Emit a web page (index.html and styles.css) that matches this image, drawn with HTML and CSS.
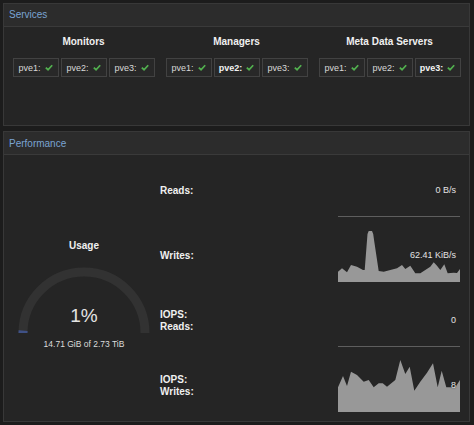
FILE: index.html
```html
<!DOCTYPE html>
<html lang="en">
<head>
<meta charset="utf-8">
<title>Ceph Status</title>
<link rel="stylesheet" href="styles.css">
</head>
<body>
<div class="page">
  <section class="panel">
    <div class="panel-header">Services</div>
    <div class="panel-body services-body">
      <div class="svc-col">
        <div class="svc-title">Monitors</div>
        <div class="badges">
          <span class="badge">pve1: <svg class="check" viewBox="0 0 10 8"><path d="M1 4.2 L3.8 6.8 L9 1.2"/></svg></span>
          <span class="badge">pve2: <svg class="check" viewBox="0 0 10 8"><path d="M1 4.2 L3.8 6.8 L9 1.2"/></svg></span>
          <span class="badge">pve3: <svg class="check" viewBox="0 0 10 8"><path d="M1 4.2 L3.8 6.8 L9 1.2"/></svg></span>
        </div>
      </div>
      <div class="svc-col">
        <div class="svc-title">Managers</div>
        <div class="badges">
          <span class="badge">pve1: <svg class="check" viewBox="0 0 10 8"><path d="M1 4.2 L3.8 6.8 L9 1.2"/></svg></span>
          <span class="badge active">pve2: <svg class="check" viewBox="0 0 10 8"><path d="M1 4.2 L3.8 6.8 L9 1.2"/></svg></span>
          <span class="badge">pve3: <svg class="check" viewBox="0 0 10 8"><path d="M1 4.2 L3.8 6.8 L9 1.2"/></svg></span>
        </div>
      </div>
      <div class="svc-col">
        <div class="svc-title">Meta Data Servers</div>
        <div class="badges">
          <span class="badge">pve1: <svg class="check" viewBox="0 0 10 8"><path d="M1 4.2 L3.8 6.8 L9 1.2"/></svg></span>
          <span class="badge">pve2: <svg class="check" viewBox="0 0 10 8"><path d="M1 4.2 L3.8 6.8 L9 1.2"/></svg></span>
          <span class="badge active">pve3: <svg class="check" viewBox="0 0 10 8"><path d="M1 4.2 L3.8 6.8 L9 1.2"/></svg></span>
        </div>
      </div>
    </div>
  </section>

  <section class="panel perf">
    <div class="panel-header">Performance</div>
    <div class="panel-body perf-body">
      <div class="usage">
        <div class="usage-title">Usage</div>
        <div class="gauge">
          <svg class="gauge-svg" viewBox="0 0 140 72" width="140" height="72">
            <path class="gauge-bg" d="M9 68 A61 61 0 0 1 131 68"/>
            <path class="gauge-fg" d="M9 68 A61 61 0 0 1 9.1 65.6"/>
          </svg>
          <div class="gauge-value">1%</div>
        </div>
        <div class="usage-text">14.71 GiB of 2.73 TiB</div>
      </div>
      <div class="metrics">
        <div class="metric">
          <div class="metric-label">Reads:</div>
          <div class="chart">
            <svg class="spark" viewBox="0 0 122 52" width="122" height="52">
              <line class="flat" x1="0" y1="51.5" x2="122" y2="51.5"/>
            </svg>
            <div class="metric-value">0 B/s</div>
          </div>
        </div>
        <div class="metric">
          <div class="metric-label">Writes:</div>
          <div class="chart">
            <svg class="spark" viewBox="0 0 122 52" width="122" height="52">
              <polygon class="area" points="0,41.7 4,38.3 9,42.3 13,35 19,36.7 25,40 26.7,40 29.5,4 30.7,1 34,1 35.2,4 36.3,11.7 40.7,41 45.7,41.7 52.3,40 59,38.3 64,35 67.3,39 72.3,35.7 77.3,43.3 82.3,43.3 87.3,40 92.3,36.7 95.7,32.3 99,35.7 102.3,40 106.3,34.3 109.7,43.3 115.7,42.7 119,43 122,39 122,52 0,52"/>
            </svg>
            <div class="metric-value">62.41 KiB/s</div>
          </div>
        </div>
        <div class="metric">
          <div class="metric-label">IOPS:<br>Reads:</div>
          <div class="chart">
            <svg class="spark" viewBox="0 0 122 52" width="122" height="52">
              <line class="flat" x1="0" y1="51.5" x2="122" y2="51.5"/>
            </svg>
            <div class="metric-value">0</div>
          </div>
        </div>
        <div class="metric">
          <div class="metric-label">IOPS:<br>Writes:</div>
          <div class="chart">
            <svg class="spark" viewBox="0 0 122 52" width="122" height="52">
              <polygon class="area" points="0,27.3 5,16 9,26 13,11.7 19,15 25.7,21.7 30.7,20 35.7,27.3 40.7,23.3 44.7,23.3 49,26.7 57.3,20 62.3,0 67.3,14 71.7,6.7 76.3,30.7 82.3,21.7 89,12.7 95,3.3 99.7,27.3 103.7,10.7 108.3,27.3 114,27.3 117.3,27.3 122,20 122,52 0,52"/>
            </svg>
            <div class="metric-value">8</div>
          </div>
        </div>
      </div>
    </div>
  </section>
</div>
</body>
</html>
```

FILE: styles.css
```css
* { box-sizing: border-box; }

html, body {
  margin: 0;
  padding: 0;
  background: #1c1c1c;
}

body {
  font-family: "Liberation Sans", Arial, sans-serif;
  color: #e6e6e6;
}

.page {
  width: 474px;
  height: 425px;
  padding: 3px 4px 0 3px;
  display: flex;
  flex-direction: column;
  gap: 5px;
}

.panel {
  width: 467px;
  border: 1px solid #383838;
  background: #252525;
  display: flex;
  flex-direction: column;
}

.panel-header {
  height: 23px;
  line-height: 22px;
  padding-left: 5px;
  font-size: 10px;
  color: #79a3d2;
  background: #2c2c2c;
  border-bottom: 1px solid #3a3a3a;
}

.perf .panel-header {
  line-height: 23px;
}

/* Services */
.services-body {
  height: 98px;
  display: flex;
  padding: 8px 3px 0 3px;
}

.svc-col {
  width: 153px;
  display: flex;
  flex-direction: column;
  align-items: center;
}

.svc-title {
  font-size: 10px;
  font-weight: bold;
  line-height: 14px;
  color: #f0f0f0;
}

.badges {
  margin-top: 9px;
  display: flex;
  gap: 2px;
}

.badge {
  width: 46px;
  height: 19px;
  border: 1px solid #424242;
  background: #282828;
  display: flex;
  align-items: center;
  justify-content: center;
  gap: 4px;
  font-size: 9px;
  color: #d8d8d8;
  white-space: nowrap;
}

.badge.active {
  font-weight: bold;
  color: #f2f2f2;
}

.check {
  width: 8px;
  height: 7px;
  fill: none;
  stroke: #52b04f;
  stroke-width: 2.2;
  stroke-linecap: butt;
}

/* Performance */
.perf {
  height: 291px;
}

.perf-body {
  flex: 1;
  display: flex;
  padding: 3px 9px 0 4px;
}

.usage {
  width: 152px;
  display: flex;
  flex-direction: column;
  align-items: center;
  padding-top: 82px;
}

.usage-title {
  font-size: 10px;
  font-weight: bold;
  line-height: 12px;
  color: #f0f0f0;
}

.gauge {
  margin-top: 13px;
  display: grid;
}

.gauge-svg,
.gauge-value {
  grid-area: 1 / 1;
}

.gauge-svg {
  display: block;
}

.gauge-bg {
  fill: none;
  stroke: #323232;
  stroke-width: 9;
}

.gauge-fg {
  fill: none;
  stroke: #3f5186;
  stroke-width: 9;
}

.gauge-value {
  align-self: end;
  justify-self: center;
  margin-bottom: 11px;
  font-size: 19px;
  line-height: 20px;
  color: #e4e4e4;
}

.usage-text {
  margin-top: 2px;
  font-size: 8.5px;
  line-height: 11px;
  color: #dcdcdc;
}

.metrics {
  flex: 1;
  display: flex;
  flex-direction: column;
}

.metric {
  height: 65px;
  display: flex;
  align-items: center;
  justify-content: space-between;
}

.metric-label {
  font-size: 10px;
  font-weight: bold;
  line-height: 12px;
  color: #f0f0f0;
}

.chart {
  display: grid;
  width: 122px;
  height: 52px;
}

.spark,
.metric-value {
  grid-area: 1 / 1;
}

.spark {
  display: block;
}

.area {
  fill: #989898;
}

.flat {
  stroke: #5e5e5e;
  stroke-width: 1;
}

.metric-value {
  align-self: center;
  justify-self: end;
  margin-right: 4px;
  font-size: 9px;
  line-height: 11px;
  color: #e2e2e2;
  text-shadow: 0 0 2px #2a2a2a;
}
```
